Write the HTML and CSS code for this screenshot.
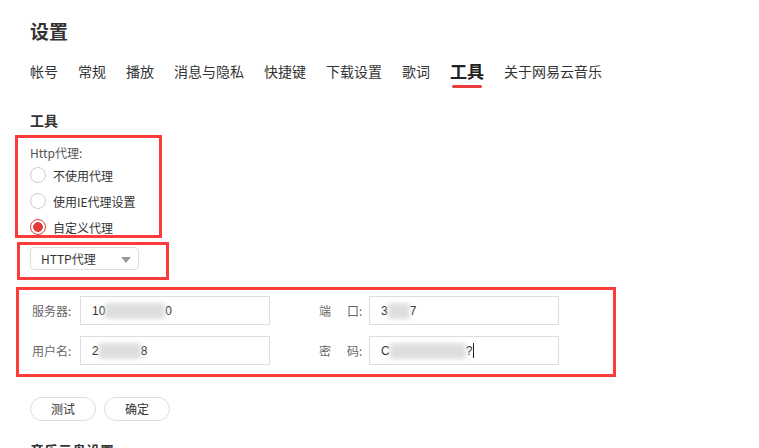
FILE: index.html
```
<!DOCTYPE html>
<html lang="zh">
<head>
<meta charset="utf-8">
<title>设置</title>
<link rel="stylesheet" href="styles.css">
</head>
<body>
<div class="page">
  <h1 class="title">设置</h1>
  <nav class="tabs">
    <span class="tab">帐号</span>
    <span class="tab">常规</span>
    <span class="tab">播放</span>
    <span class="tab">消息与隐私</span>
    <span class="tab">快捷键</span>
    <span class="tab">下载设置</span>
    <span class="tab">歌词</span>
    <span class="tab active">工具<i class="bar"></i></span>
    <span class="tab">关于网易云音乐</span>
  </nav>
  <h2 class="section">工具</h2>

  <div class="box box-proxy">
    <div class="label">Http代理:</div>
    <label class="radio"><span class="dot"></span>不使用代理</label>
    <label class="radio"><span class="dot"></span>使用IE代理设置</label>
    <label class="radio"><span class="dot on"></span>自定义代理</label>
  </div>

  <div class="box box-select">
    <div class="select">HTTP代理<span class="caret"></span></div>
  </div>

  <div class="box box-form">
    <div class="grid">
      <span class="flabel">服务器:</span>
      <div class="input">10<span class="blur w60"></span>0</div>
      <span class="flabel second"><span class="sp">端</span>口:</span>
      <div class="input">3<span class="blur w24"></span>7</div>
      <span class="flabel">用户名:</span>
      <div class="input">2<span class="blur w40"></span>8</div>
      <span class="flabel second"><span class="sp">密</span>码:</span>
      <div class="input">C<span class="blur w76"></span>?<span class="cursor"></span></div>
    </div>
  </div>

  <div class="buttons">
    <button class="btn">测试</button>
    <button class="btn">确定</button>
  </div>
  <h2 class="section next">音乐云盘设置</h2>
</div>
</body>
</html>
```
FILE: styles.css
```
* { box-sizing: border-box; }
html, body { margin: 0; padding: 0; background: #fff; }
body {
  font-family: "Noto Sans CJK SC", "Liberation Sans", sans-serif;
  color: #333;
  overflow: hidden;
  height: 448px;
}
.page { padding: 17px 0 0 30px; }
.title {
  margin: 0;
  font-size: 19px;
  line-height: 28px;
  font-weight: bold;
  color: #333;
}
.tabs {
  display: flex;
  align-items: flex-start;
  gap: 20px;
  margin-top: 15px;
}
.tab {
  display: flex;
  flex-direction: column;
  align-items: center;
  font-size: 14px;
  line-height: 22px;
  color: #333;
}
.tab.active {
  font-size: 17px;
  font-weight: bold;
  color: #222;
}
.tab .bar {
  display: block;
  width: 30px;
  height: 3px;
  margin-top: 3px;
  border-radius: 2px;
  background: #e63c3c;
}
.section {
  margin: 22px 0 0;
  font-size: 14px;
  line-height: 20px;
  font-weight: bold;
  color: #333;
}
.box { border: 3px solid #fc3b3b; }
.box-proxy {
  margin: 5px 0 0 -15px;
  width: 147px;
  height: 103px;
  padding: 6px 0 0 12px;
}
.label {
  font-size: 12px;
  line-height: 18px;
  color: #555;
}
.radio {
  display: flex;
  align-items: center;
  height: 24px;
  margin-top: 2px;
  font-size: 12px;
  color: #333;
}
.radio:first-of-type { margin-top: 1px; }
.dot {
  width: 16px;
  height: 16px;
  border: 1px solid #ccc;
  border-radius: 50%;
  margin-right: 7px;
  flex: none;
  background: #fff;
}
.dot.on {
  border-color: #e23c3c;
  background: radial-gradient(circle, #e23c3c 0 4.5px, #fff 5.2px);
}
.box-select {
  margin: 4px 0 0 -13px;
  width: 152px;
  height: 38px;
  padding: 2px 0 0 10px;
}
.select {
  position: relative;
  width: 109px;
  height: 23px;
  border: 1px solid #ddd;
  border-radius: 4px;
  font-size: 12px;
  line-height: 21px;
  padding-left: 10px;
  color: #333;
}
.caret {
  position: absolute;
  right: 7px;
  top: 9px;
  width: 0;
  height: 0;
  border-left: 5px solid transparent;
  border-right: 5px solid transparent;
  border-top: 6px solid #999;
}
.box-form {
  margin: 7px 0 0 -14px;
  width: 600px;
  height: 90px;
  padding: 6px 0 0 13px;
}
.grid {
  display: grid;
  grid-template-columns: 48px 190px 99px 190px;
  grid-template-rows: 29px 29px;
  row-gap: 11px;
  align-items: center;
}
.flabel {
  font-size: 12px;
  color: #666;
}
.flabel.second { margin-left: 49px; width: 50px; }
.sp { margin-right: 16px; }
.input {
  display: flex;
  align-items: center;
  height: 29px;
  border: 1px solid #ddd;
  padding-left: 11px;
  font-size: 12px;
  color: #333;
  font-family: "Liberation Sans", "Noto Sans CJK SC", sans-serif;
}
.blur {
  display: inline-block;
  height: 16px;
  background: #d9d9d9;
  filter: blur(2px);
  opacity: 0.85;
}
.w60 { width: 60px; }
.w24 { width: 22px; }
.w40 { width: 42px; }
.w76 { width: 76px; }
.cursor {
  display: inline-block;
  width: 1px;
  height: 15px;
  background: #222;
  margin-left: 1px;
}
.buttons {
  display: flex;
  gap: 8px;
  margin-top: 20px;
}
.btn {
  width: 66px;
  height: 24px;
  border: 1px solid #ddd;
  border-radius: 12px;
  background: #fff;
  font-family: "Noto Sans CJK SC", sans-serif;
  font-size: 12px;
  color: #333;
  padding: 0;
  line-height: 22px;
}
.section.next { margin-top: 19px; }
```
